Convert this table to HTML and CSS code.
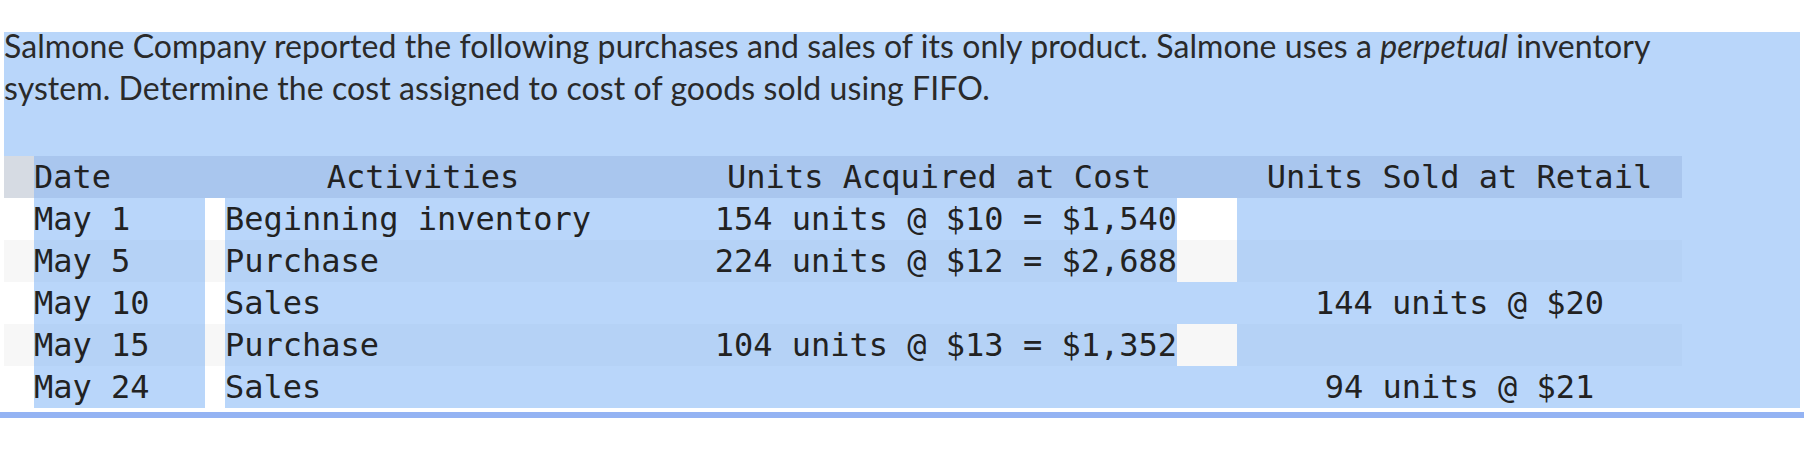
FILE: index.html
```html
<!DOCTYPE html>
<html>
<head>
<meta charset="utf-8">
<link rel="stylesheet" href="styles.css">
</head>
<body>
<div class="sel">
  <p class="q"><span>Salmone Company reported the following purchases and sales of its only product. Salmone uses a </span><em>perpetual</em><span> inventory</span><br><span>system. Determine the cost assigned to cost of goods sold using FIFO.</span></p>
  <div class="tbl">
    <div class="row head">
      <span class="pad"></span><span class="c date">Date</span><span class="g1"></span><span class="c act center">Activities</span><span class="g2"></span><span class="c cost center">Units Acquired at Cost</span><span class="g3"></span><span class="c ret">Units Sold at Retail</span>
    </div>
    <div class="row">
      <span class="pad"></span><span class="c date">May 1</span><span class="g1"></span><span class="c act">Beginning inventory</span><span class="g2"></span><span class="c cost">154 units @ $10 = $1,540</span><span class="g3"></span><span class="c ret"></span>
    </div>
    <div class="row alt">
      <span class="pad"></span><span class="c date">May 5</span><span class="g1"></span><span class="c act">Purchase</span><span class="g2"></span><span class="c cost">224 units @ $12 = $2,688</span><span class="g3"></span><span class="c ret"></span>
    </div>
    <div class="row nocost">
      <span class="pad"></span><span class="c date">May 10</span><span class="g1"></span><span class="c act">Sales</span><span class="g2"></span><span class="c cost"></span><span class="g3"></span><span class="c ret">144 units @ $20</span>
    </div>
    <div class="row alt">
      <span class="pad"></span><span class="c date">May 15</span><span class="g1"></span><span class="c act">Purchase</span><span class="g2"></span><span class="c cost">104 units @ $13 = $1,352</span><span class="g3"></span><span class="c ret"></span>
    </div>
    <div class="row nocost">
      <span class="pad"></span><span class="c date">May 24</span><span class="g1"></span><span class="c act">Sales</span><span class="g2"></span><span class="c cost"></span><span class="g3"></span><span class="c ret">94 units @ $21</span>
    </div>
  </div>
</div>
<div class="rule"></div>
</body>
</html>
```
FILE: styles.css
```css
html, body {
  margin: 0;
  padding: 0;
  background: #ffffff;
}

.sel {
  display: flow-root;
  margin: 32px 4px 0 4px;
  background: #b9d6fa;
  height: 376px;
}

.q {
  margin: -7px 0 0 0;
  font-family: "Lato", "Liberation Sans", sans-serif;
  font-size: 32px;
  line-height: 42px;
  letter-spacing: 0.08px;
  white-space: nowrap;
  color: #2a2a2a;
}

.q em {
  font-style: italic;
}

.tbl {
  margin-top: 47px;
  width: 1678px;
  font-family: "DejaVu Sans Mono", monospace;
  font-size: 32px;
  line-height: 42px;
  color: #222222;
}

.row {
  display: grid;
  grid-template-columns: 30px 171px 20px 396px 80px 476px 60px 445px;
  height: 42px;
}

.row > span {
  display: block;
  white-space: pre;
  background: #b9d6fa;
}

.row .pad,
.row .g1,
.row .g3 {
  background: #ffffff;
}

.row.nocost .g3 {
  background: #b9d6fa;
}

.row.alt > span {
  background: #b5d2f6;
}

.row.alt .pad,
.row.alt .g1,
.row.alt .g3 {
  background: #f7f7f7;
}

.row.head > span {
  background: #a9c6ee;
}

.row.head .pad {
  background: #d6dbe3;
}

.c.date, .c.act {
  text-align: left;
}

.c.cost {
  text-align: right;
}

.c.ret, .c.center {
  text-align: center;
}

.rule {
  margin-top: 4px;
  height: 6px;
  background: #94b3f3;
}
```
